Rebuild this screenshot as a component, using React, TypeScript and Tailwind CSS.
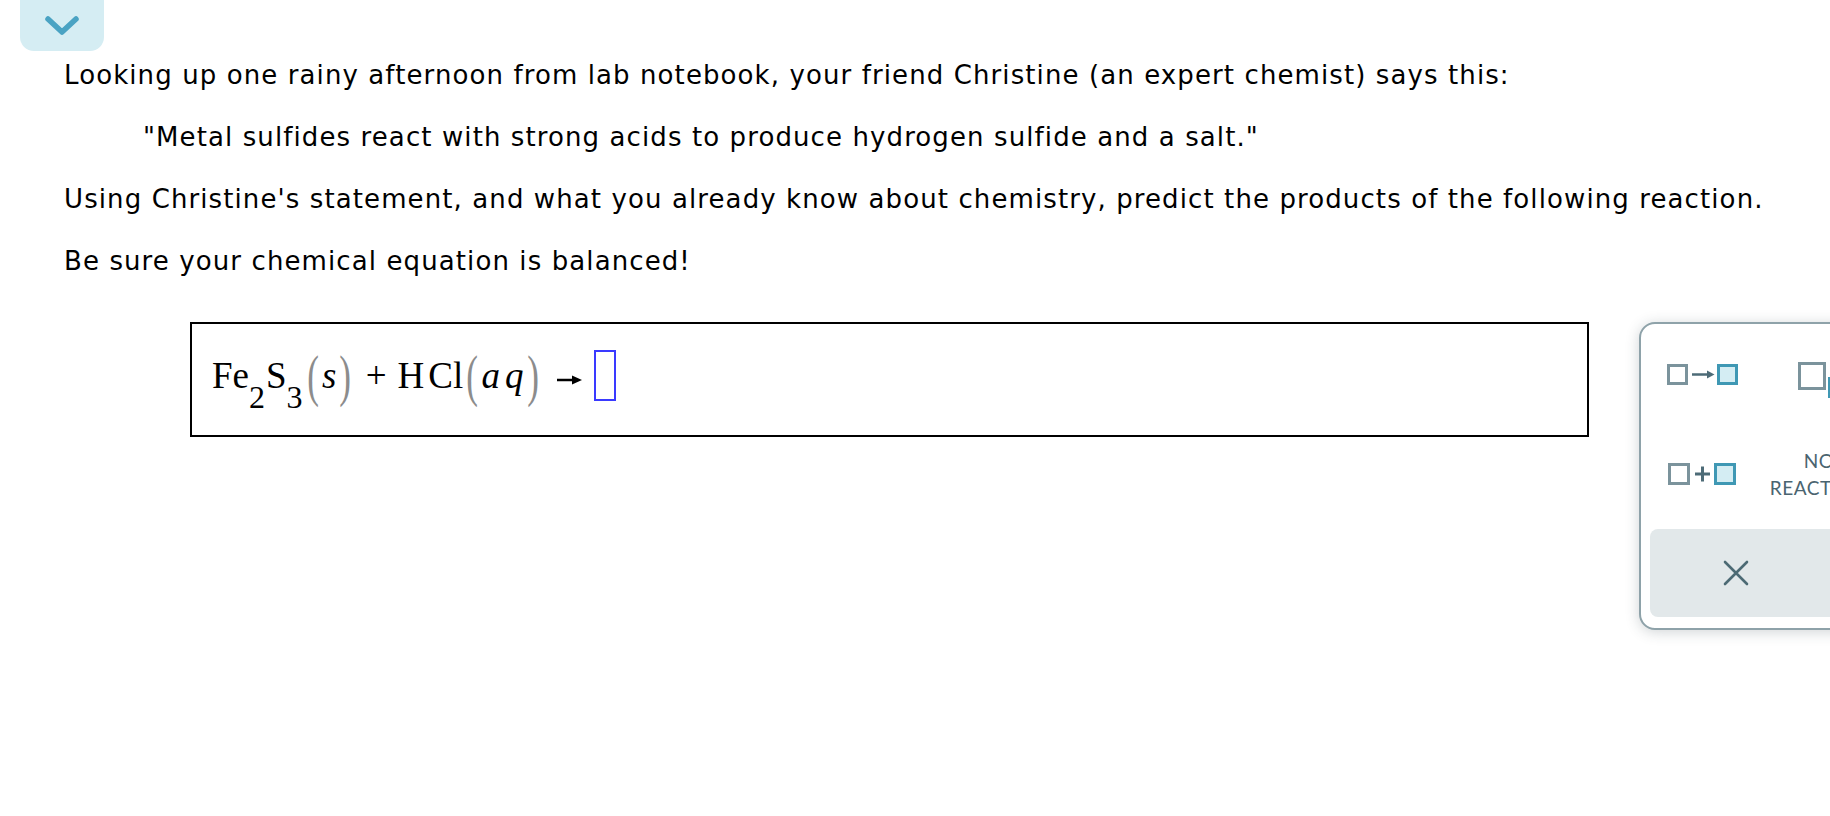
import { ReactNode } from 'react'

const Paren = ({ children }: { children: ReactNode }) => (
  <span className="inline-block text-[#8c8c8c] scale-y-[1.55] scale-x-[0.95] mx-[3px] font-light">
    {children}
  </span>
)

const Sub = ({ children }: { children: ReactNode }) => (
  <span className="text-[32px] align-[-20px] mr-[1px]">{children}</span>
)

const ArrowIcon = () => (
  <svg width="72" height="22" viewBox="0 0 72 22">
    <rect x="1.5" y="1.5" width="18" height="18" fill="#fff" stroke="#7b939c" strokeWidth="3" />
    <line x1="25" y1="10.5" x2="42" y2="10.5" stroke="#4d6b77" strokeWidth="2.5" />
    <path d="M40 6.5 L47.5 10.5 L40 14.5 Z" fill="#4d6b77" />
    <rect x="51.5" y="1.5" width="18" height="18" fill="#d4edf3" stroke="#3f98b4" strokeWidth="3" />
  </svg>
)

const PlusIcon = () => (
  <svg width="70" height="22" viewBox="0 0 70 22">
    <rect x="1.5" y="1.5" width="19" height="19" fill="#fff" stroke="#7b939c" strokeWidth="3" />
    <line x1="27" y1="11" x2="42" y2="11" stroke="#4d6b77" strokeWidth="3" />
    <line x1="34.5" y1="3.5" x2="34.5" y2="18.5" stroke="#4d6b77" strokeWidth="3" />
    <rect x="47.5" y="1.5" width="19" height="19" fill="#d4edf3" stroke="#3f98b4" strokeWidth="3" />
  </svg>
)

const SubscriptIcon = () => (
  <svg width="50" height="38" viewBox="0 0 50 38">
    <rect x="1.5" y="1.5" width="25" height="25" fill="#fff" stroke="#7b939c" strokeWidth="3" />
    <rect x="31.5" y="16.5" width="14" height="18" fill="#d4edf3" stroke="#3f98b4" strokeWidth="3" />
  </svg>
)

const Equation = () => (
  <div className="text-[37px] leading-[40px] text-black whitespace-nowrap font-['Liberation_Serif',serif]">
    <span>Fe</span>
    <Sub>2</Sub>
    <span>S</span>
    <Sub>3</Sub>
    <Paren>(</Paren>
    <span className="italic">s</span>
    <Paren>)</Paren>
    <span className="mx-[11px]">+</span>
    <span>H</span>
    <span className="ml-[4px]">Cl</span>
    <Paren>(</Paren>
    <span className="italic">a</span>
    <span className="italic ml-[5px]">q</span>
    <Paren>)</Paren>
    <svg className="inline-block align-middle ml-[15px]" width="26" height="12" viewBox="0 0 26 12">
      <line x1="0" y1="6" x2="17" y2="6" stroke="#000" strokeWidth="2.5" />
      <path d="M15 1.5 L25 6 L15 10.5 Z" fill="#000" />
    </svg>
    <span className="inline-block align-[-13px] ml-[11px] w-[22px] h-[51px] border-2 border-[#3a3aff]" />
  </div>
)

export default function App() {
  return (
    <div className="relative w-[1830px] h-[816px] overflow-hidden bg-white">
      <div className="ml-[20px] w-[84px] h-[51px] bg-[#d5edf3] rounded-b-[14px] flex items-center justify-center">
        <svg width="36" height="22" viewBox="0 0 36 22">
          <path d="M4 4 L18 17 L32 4" fill="none" stroke="#4aa3c3" strokeWidth="5.5" strokeLinecap="round" strokeLinejoin="round" />
        </svg>
      </div>

      <div className="mt-[9px] pl-[64px] flex flex-col gap-[32px] text-[26px] leading-[30px] tracking-[1.1px] text-black font-['DejaVu_Sans',sans-serif]">
        <p>Looking up one rainy afternoon from lab notebook, your friend Christine (an expert chemist) says this:</p>
        <p className="pl-[79px]">"Metal sulfides react with strong acids to produce hydrogen sulfide and a salt."</p>
        <p>Using Christine's statement, and what you already know about chemistry, predict the products of the following reaction.</p>
        <p>Be sure your chemical equation is balanced!</p>
      </div>

      <div className="mt-[46px] pl-[190px] flex items-start gap-[50px]">
        <div className="w-[1399px] h-[115px] shrink-0 border-2 border-black pl-[20px] pt-[26px]">
          <Equation />
        </div>

        <div className="w-[320px] h-[308px] shrink-0 border-2 border-[#8ea2a9] rounded-[16px] bg-white shadow-[0_2px_14px_rgba(40,60,70,0.22)] px-[9px] flex flex-col">
          <div className="grid grid-cols-[106px_124px] grid-rows-[100px_100px]">
            <div className="flex items-center justify-center pt-[2px]">
              <ArrowIcon />
            </div>
            <div className="flex items-center pl-[42px] pt-[14px]">
              <SubscriptIcon />
            </div>
            <div className="flex items-center justify-center">
              <PlusIcon />
            </div>
            <div className="flex flex-col items-center justify-center pl-[2px] text-[19px] leading-[27px] tracking-[0.5px] text-[#4a6470] font-['Lato',sans-serif]">
              <span>NO</span>
              <span>REACTION</span>
            </div>
          </div>
          <div className="mt-[5px] h-[88px] rounded-[8px] bg-[#e2e8ea] flex">
            <div className="w-[172px] flex items-center justify-center">
              <svg width="26" height="26" viewBox="0 0 26 26">
                <path d="M2 2 L24 24 M24 2 L2 24" stroke="#4c6a74" strokeWidth="2.6" strokeLinecap="round" />
              </svg>
            </div>
          </div>
        </div>
      </div>
    </div>
  )
}
